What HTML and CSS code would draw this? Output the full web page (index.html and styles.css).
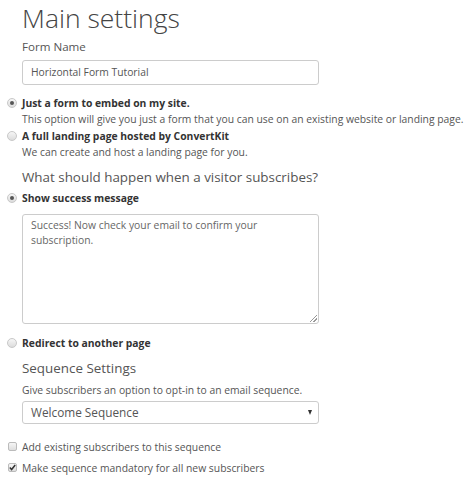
FILE: index.html
```html
<!DOCTYPE html>
<html>
<head>
<meta charset="utf-8">
<link rel="stylesheet" href="styles.css">
</head>
<body>
<div class="page">
  <h1 class="title">Main settings</h1>
  <div class="field">
    <label class="label">Form Name</label>
    <div class="input">Horizontal Form Tutorial</div>
  </div>

  <div class="option first">
    <span class="radio checked"></span>
    <div class="option-body">
      <div class="option-title">Just a form to embed on my site.</div>
      <div class="option-desc">This option will give you just a form that you can use on an existing website or landing page.</div>
    </div>
  </div>
  <div class="option second">
    <span class="radio"></span>
    <div class="option-body">
      <div class="option-title">A full landing page hosted by ConvertKit</div>
      <div class="option-desc">We can create and host a landing page for you.</div>
    </div>
  </div>

  <h2 class="subhead">What should happen when a visitor subscribes?</h2>
  <div class="option success">
    <span class="radio checked"></span>
    <div class="option-body">
      <div class="option-title">Show success message</div>
    </div>
  </div>
  <div class="textarea">Success! Now check your email to confirm your subscription.<span class="grip"></span></div>

  <div class="option redirect">
    <span class="radio"></span>
    <div class="option-body">
      <div class="option-title">Redirect to another page</div>
    </div>
  </div>

  <h2 class="subhead seq">Sequence Settings</h2>
  <div class="help">Give subscribers an option to opt-in to an email sequence.</div>
  <div class="select">Welcome Sequence<span class="caret"></span></div>

  <div class="check-row first">
    <span class="checkbox"></span>
    <span class="check-label">Add existing subscribers to this sequence</span>
  </div>
  <div class="check-row">
    <span class="checkbox checked"><svg width="7" height="7" viewBox="0 0 7 7"><path d="M0.8 3.6 L2.6 5.5 L6.2 1" fill="none" stroke="#333" stroke-width="1.5"/></svg></span>
    <span class="check-label">Make sequence mandatory for all new subscribers</span>
  </div>
</div>
</body>
</html>
```

FILE: styles.css
```css
html, body {
  margin: 0;
  padding: 0;
  background: #fff;
}
body {
  font-family: "Open Sans", "Liberation Sans", sans-serif;
  color: #555;
}
.page {
  padding: 0 0 0 22px;
  width: 452px;
}
.title {
  margin: 0;
  font-weight: 300;
  font-size: 26.5px;
  line-height: 36px;
  color: #444;
}
.field {
  margin-top: 3px;
}
.label {
  display: block;
  font-size: 11.6px;
  line-height: 16px;
  color: #555;
  margin-bottom: 5px;
}
.input {
  box-sizing: border-box;
  width: 297px;
  height: 25px;
  border: 1px solid #ccc;
  border-radius: 3px;
  padding: 0 8px;
  font-size: 10.3px;
  line-height: 23px;
  color: #555;
}
.option {
  display: flex;
  position: relative;
}
.option.first {
  margin-top: 10px;
}
.option.second {
  margin-top: 1px;
}
.option-body {
  font-size: 10.35px;
  line-height: 16px;
}
.option-title {
  font-weight: 700;
  color: #333;
}
.option-desc {
  color: #555;
}
.radio {
  position: absolute;
  left: -15px;
  top: 3px;
  width: 8px;
  height: 8px;
  border-radius: 50%;
  border: 1px solid #c8c8c8;
  background: linear-gradient(#f6f6f6, #dcdcdc);
}
.radio.checked::after {
  content: "";
  position: absolute;
  left: 2px;
  top: 2px;
  width: 4px;
  height: 4px;
  border-radius: 50%;
  background: #555;
}
.subhead {
  margin: 7px 0 0;
  font-weight: 400;
  font-size: 13.4px;
  line-height: 20px;
  color: #555;
}
.option.success {
  margin-top: 3px;
}
.textarea {
  position: relative;
  box-sizing: border-box;
  width: 297px;
  height: 110px;
  margin-top: 8px;
  border: 1px solid #ccc;
  border-radius: 3px;
  padding: 3px 8px;
  font-size: 10.35px;
  line-height: 15px;
  color: #666;
}
.grip {
  position: absolute;
  right: 1px;
  bottom: 1px;
  width: 7px;
  height: 7px;
  background: linear-gradient(135deg, transparent 45%, #999 45%, #999 55%, transparent 55%, transparent 70%, #999 70%, #999 80%, transparent 80%);
}
.option.redirect {
  margin-top: 11px;
}
.subhead.seq {
  margin-top: 7px;
}
.help {
  margin-top: 4px;
  font-size: 10.35px;
  line-height: 16px;
  color: #555;
}
.select {
  position: relative;
  box-sizing: border-box;
  width: 297px;
  height: 23px;
  margin-top: 3px;
  border: 1px solid #ccc;
  border-radius: 3px;
  padding: 0 8px;
  font-size: 11.8px;
  line-height: 21px;
  color: #555;
}
.caret {
  position: absolute;
  right: 6px;
  top: 8px;
  width: 0;
  height: 0;
  border-left: 2.5px solid transparent;
  border-right: 2.5px solid transparent;
  border-top: 5px solid #333;
}
.check-row {
  display: flex;
  align-items: center;
  position: relative;
  height: 21px;
  font-size: 10.35px;
}
.check-row.first {
  margin-top: 12px;
}
.checkbox {
  position: absolute;
  left: -14px;
  top: 6px;
  width: 7px;
  height: 7px;
  border: 1px solid #bbb;
  border-radius: 2px;
  background: linear-gradient(#f6f6f6, #dedede);
  display: flex;
  align-items: center;
  justify-content: center;
}
.checkbox svg {
  display: block;
}
.check-label {
  color: #555;
}
```
